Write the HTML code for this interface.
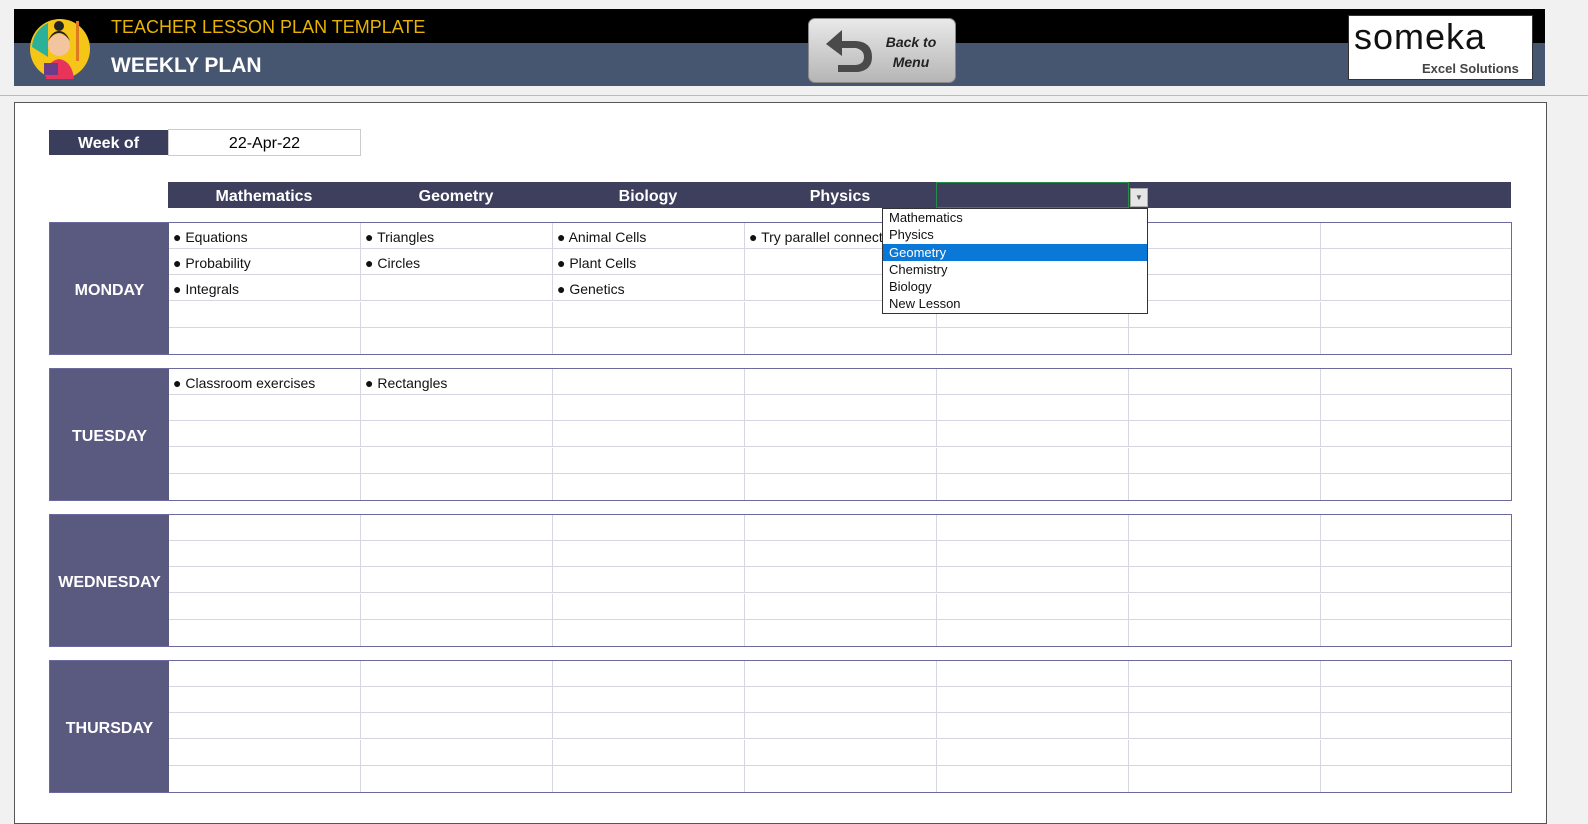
<!DOCTYPE html><html><head><style>
body{margin:0;width:1588px;height:814px;background:#f1f1f1;font-family:"Liberation Sans",sans-serif;position:relative;overflow:hidden}
.a{position:absolute}
.hdr{left:14px;top:9px;width:1531px;height:77px;background:#465670}
.blk{left:14px;top:9px;width:1531px;height:34px;background:#000}
.main{left:14px;top:102px;width:1531px;height:720px;background:#fff;border:1px solid #555}
.day{position:absolute;left:49px;width:1461px;height:131px;border:1px solid #6c6a9c;background:#fff}
.day .lab{position:absolute;left:0;top:0;width:119px;height:131px;background:#5a5a80;color:#fff;font-weight:bold;font-size:16px;display:flex;align-items:center;justify-content:center;padding-top:4px;box-sizing:border-box}
.cell{position:absolute;height:26px;border-right:1px solid #d6d6e2;border-bottom:1px solid #d6d6e2;font-size:14px;padding-left:4px;line-height:28px;box-sizing:border-box;color:#111;white-space:nowrap;overflow:visible}
.th{position:absolute;top:182px;height:26px;color:#fff;font-weight:bold;font-size:16px;line-height:29px;text-align:center;width:192px}
</style></head><body>
<div class="a hdr"></div><div class="a blk"></div>
<svg class="a" style="left:28px;top:17px" width="64" height="64" viewBox="0 0 64 64"><circle cx="32" cy="32" r="30" fill="#f5c518"/><path d="M4 30 A28 28 0 0 1 20 6 L20 40 Z" fill="#2bb09a"/><circle cx="31" cy="28" r="11" fill="#f2c4a0"/><path d="M20 24 Q31 8 42 24 Q38 14 31 14 Q24 14 20 24Z" fill="#222"/><circle cx="31" cy="9" r="5" fill="#222"/><path d="M18 62 Q18 44 31 42 Q44 44 46 62Z" fill="#e8335a"/><rect x="16" y="46" width="14" height="12" fill="#6a3d8a"/><rect x="48" y="4" width="3" height="40" fill="#e07a20"/></svg>
<div class="a" style="left:111px;top:17px;color:#e8b400;font-size:18px">TEACHER LESSON PLAN TEMPLATE</div>
<div class="a" style="left:111px;top:54px;color:#fff;font-size:21px;font-weight:bold">WEEKLY PLAN</div>
<div class="a" style="left:808px;top:18px;width:146px;height:63px;border-radius:7px;background:linear-gradient(#e9e9e9,#b5b5b5);border:1px solid #888"></div>
<svg class="a" style="left:820px;top:24px" width="58" height="52" viewBox="0 0 58 52"><path d="M22 6 L6 20 L22 32 L22 24 L36 24 Q44 26 44 33 Q44 40 36 41 L18 41 L18 48 L38 48 Q52 46 52 33 Q52 18 36 17 L22 17 Z" fill="#4a4a4a"/></svg>
<div class="a" style="left:876px;top:32px;width:70px;text-align:center;font-size:14px;font-weight:bold;font-style:italic;color:#222;line-height:20px">Back to<br>Menu</div>
<div class="a" style="left:1348px;top:15px;width:183px;height:63px;background:#fff;border:1px solid #333"></div>
<div class="a" style="left:1354px;top:16px;font-size:36px;color:#111;letter-spacing:1px">someka</div>
<div class="a" style="left:1422px;top:61px;font-size:13px;font-weight:bold;color:#444">Excel Solutions</div>
<div class="a" style="left:0;top:95px;width:1588px;height:1px;background:#bbb"></div>
<div class="a main"></div>
<div class="a" style="left:49px;top:130px;width:119px;height:25px;background:#3b3d5c;color:#fff;font-weight:bold;font-size:16px;text-align:center;line-height:27px">Week of</div>
<div class="a" style="left:168px;top:129px;width:191px;height:25px;border:1px solid #ccc;font-size:16px;text-align:center;line-height:28px">22-Apr-22</div>
<div class="a" style="left:168px;top:182px;width:1343px;height:26px;background:#3d3f5c"></div>
<div class="th" style="left:168px">Mathematics</div><div class="th" style="left:360px">Geometry</div><div class="th" style="left:552px">Biology</div><div class="th" style="left:744px">Physics</div>
<div class="a" style="left:936px;top:182px;width:191px;height:24px;border:1px solid #2a8a4a"></div>
<div class="a" style="left:1130px;top:188px;width:16px;height:17px;background:#e6e6e6;border:1px solid #aaa;font-size:8px;text-align:center;line-height:17px;color:#555">▼</div>
<div id="days"></div>
<div class="a" style="left:882px;top:208px;width:264px;height:104px;background:#fff;border:1px solid #333;font-size:13px;line-height:17.3px;color:#111">
<div style="padding-left:6px">Mathematics</div><div style="padding-left:6px">Physics</div><div style="padding-left:6px;background:#0a78d7;color:#fff">Geometry</div><div style="padding-left:6px">Chemistry</div><div style="padding-left:6px">Biology</div><div style="padding-left:6px">New Lesson</div></div>
<script>
var days=[["MONDAY",222,[["Equations","Triangles","Animal Cells","Try parallel connection"],["Probability","Circles","Plant Cells"],["Integrals","","Genetics"]]],["TUESDAY",368,[["Classroom exercises","Rectangles"]]],["WEDNESDAY",514,[]],["THURSDAY",660,[]]];
var h="";days.forEach(function(d){h+='<div class="day" style="top:'+d[1]+'px"><div class="lab">'+d[0]+'</div>';for(var r=0;r<5;r++)for(var c=0;c<7;c++){var t=(d[2][r]&&d[2][r][c])?'● '+d[2][r][c]:'';h+='<div class="cell" style="left:'+(119+c*192)+'px;top:'+(r*26.2)+'px;width:'+(c==6?190:192)+'px;'+(r==4?'border-bottom:none;':'')+(c==6?'border-right:none;':'')+'">'+t+'</div>';}h+='</div>';});
document.getElementById("days").innerHTML=h;
</script>
</body></html>
